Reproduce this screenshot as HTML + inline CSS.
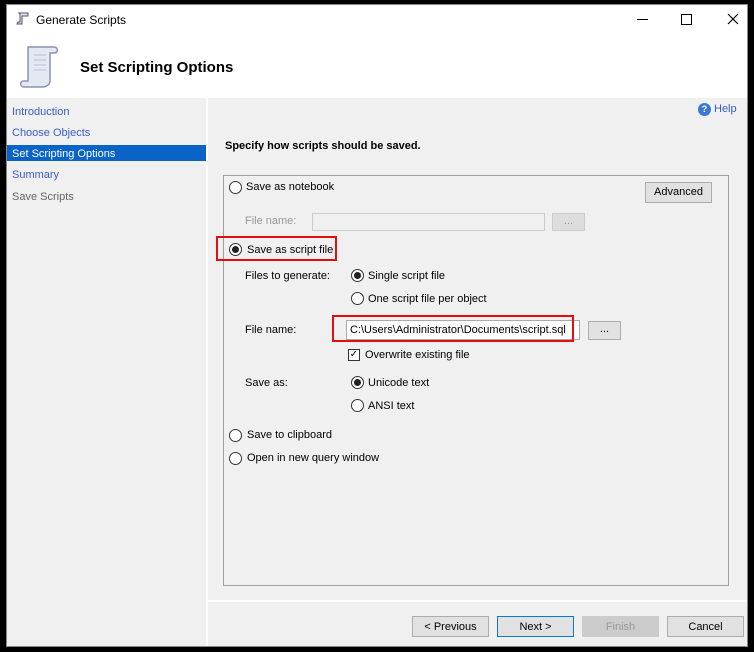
<!DOCTYPE html>
<html><head><style>
*{margin:0;padding:0;box-sizing:border-box}
body{width:754px;height:652px;background:#000;position:relative;overflow:hidden;font-family:"Liberation Sans",Arial,sans-serif;font-size:11px;color:#000}
.a{position:absolute}
.win{left:6px;top:4px;width:742px;height:643px;background:#f0f0f0;border:1px solid #888}
.rad{width:13px;height:13px;border:1px solid #333;border-radius:50%;background:#fff}
.rad.on::after{content:"";position:absolute;left:2px;top:2px;width:7px;height:7px;border-radius:50%;background:#222}
.btn{border:1px solid #adadad;background:#e1e1e1;text-align:center;line-height:19px;font-size:11px}
.red{border:2px solid #e01010}
.nav{color:#3a5bc7;font-size:11px}
</style></head><body>
<div class="a win"></div>
<div class="a" style="left:7px;top:5px;width:740px;height:93px;background:#fff"></div>
<svg class="a" style="left:15px;top:11px" width="16" height="16" viewBox="0 0 16 16"><path d="M4 2h9v3H7v8H2l1-2h2V3z" fill="#dde3ee" stroke="#556" stroke-width="1"/></svg>
<div class="a" style="left:36px;top:13px;font-size:12px">Generate Scripts</div>
<div class="a" style="left:637px;top:19px;width:11px;border-top:1px solid #000"></div>
<div class="a" style="left:681px;top:14px;width:11px;height:11px;border:1px solid #000"></div>
<svg class="a" style="left:727px;top:13px" width="12" height="12" viewBox="0 0 12 12"><path d="M1 1L11 11M11 1L1 11" stroke="#000" stroke-width="1.2"/></svg>
<svg class="a" style="left:18px;top:43px" width="44" height="46" viewBox="0 0 44 46"><path d="M10 4h26c4 0 5 6 0 6h-4v28c0 4-4 6-8 6H6c-4 0-5-6 0-6h4z" fill="#e3e8f2" stroke="#8a94b0" stroke-width="1.5"/><path d="M16 12h12M16 17h12M16 22h12M16 27h12" stroke="#b8c0d4"/></svg>
<div class="a" style="left:80px;top:59px;font-size:15px;font-weight:bold">Set Scripting Options</div>
<div class="a" style="left:206px;top:98px;width:2px;height:548px;background:#fff"></div>
<div class="a nav" style="left:12px;top:106px">Introduction</div>
<div class="a nav" style="left:12px;top:127px">Choose Objects</div>
<div class="a" style="left:7px;top:145px;width:199px;height:16px;background:#0a64c8"></div>
<div class="a" style="left:12px;top:148px;color:#fff">Set Scripting Options</div>
<div class="a nav" style="left:12px;top:169px">Summary</div>
<div class="a" style="left:12px;top:191px;color:#666">Save Scripts</div>
<div class="a" style="left:698px;top:103px;width:13px;height:13px;border-radius:50%;background:#3a78d0;color:#fff;font-size:9px;font-weight:bold;text-align:center;line-height:13px">?</div>
<div class="a" style="left:714px;top:103px;color:#3a5bc7">Help</div>
<div class="a" style="left:225px;top:140px;font-weight:bold">Specify how scripts should be saved.</div>
<div class="a" style="left:223px;top:175px;width:506px;height:411px;border:1px solid #a0a0a0"></div>
<div class="a rad" style="left:229px;top:181px"></div>
<div class="a" style="left:246px;top:181px">Save as notebook</div>
<div class="a btn" style="left:645px;top:182px;width:67px;height:21px">Advanced</div>
<div class="a" style="left:245px;top:215px;color:#999">File name:</div>
<div class="a" style="left:312px;top:213px;width:233px;height:18px;border:1px solid #ccc;background:#f0f0f0"></div>
<div class="a btn" style="left:552px;top:213px;width:33px;height:18px;color:#999;background:#ddd;border-color:#ccc;line-height:14px">...</div>
<div class="a red" style="left:216px;top:236px;width:121px;height:25px"></div>
<div class="a rad on" style="left:229px;top:243px"></div>
<div class="a" style="left:247px;top:244px">Save as script file</div>
<div class="a" style="left:245px;top:270px">Files to generate:</div>
<div class="a rad on" style="left:351px;top:269px"></div>
<div class="a" style="left:368px;top:270px">Single script file</div>
<div class="a rad" style="left:351px;top:292px"></div>
<div class="a" style="left:368px;top:293px">One script file per object</div>
<div class="a" style="left:245px;top:324px">File name:</div>
<div class="a" style="left:346px;top:320px;width:234px;height:20px;border:1px solid #aaa;background:#fff"></div>
<div class="a" style="left:350px;top:324px">C:\Users\Administrator\Documents\script.sql</div>
<div class="a red" style="left:332px;top:315px;width:242px;height:27px"></div>
<div class="a btn" style="left:588px;top:321px;width:33px;height:19px;line-height:14px">...</div>
<div class="a" style="left:348px;top:349px;width:12px;height:12px;border:1px solid #333;background:#fff;font-size:10px;line-height:10px;text-align:center">✓</div>
<div class="a" style="left:365px;top:349px">Overwrite existing file</div>
<div class="a" style="left:245px;top:377px">Save as:</div>
<div class="a rad on" style="left:351px;top:376px"></div>
<div class="a" style="left:368px;top:377px">Unicode text</div>
<div class="a rad" style="left:351px;top:399px"></div>
<div class="a" style="left:368px;top:400px">ANSI text</div>
<div class="a rad" style="left:229px;top:429px"></div>
<div class="a" style="left:247px;top:429px">Save to clipboard</div>
<div class="a rad" style="left:229px;top:452px"></div>
<div class="a" style="left:247px;top:452px">Open in new query window</div>
<div class="a" style="left:208px;top:600px;width:539px;height:2px;background:#fff"></div>
<div class="a btn" style="left:412px;top:616px;width:77px;height:21px;line-height:21px">&lt; Previous</div>
<div class="a btn" style="left:497px;top:616px;width:77px;height:21px;line-height:21px;border-color:#0a78d7">Next &gt;</div>
<div class="a btn" style="left:582px;top:616px;width:77px;height:21px;line-height:21px;background:#ccc;border-color:#ccc;color:#999">Finish</div>
<div class="a btn" style="left:667px;top:616px;width:77px;height:21px;line-height:21px">Cancel</div>
</body></html>
